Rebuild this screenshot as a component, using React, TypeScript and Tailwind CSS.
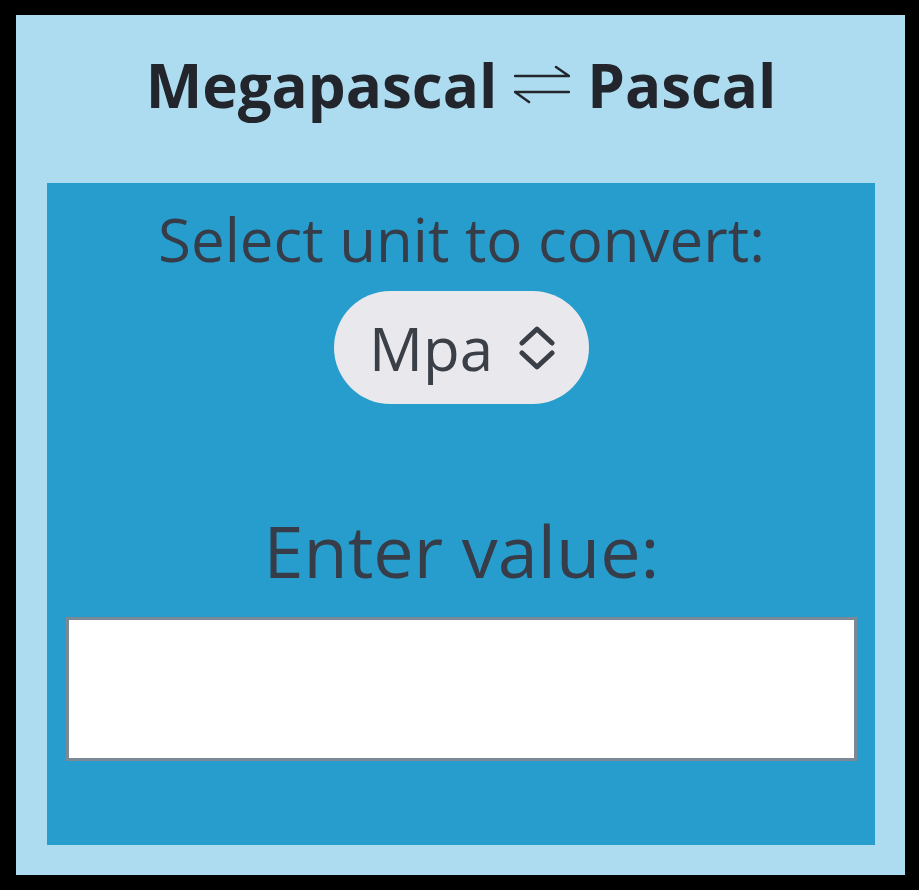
import { useState } from "react";

const ArrowSwap = () => (
  <svg
    width="56"
    height="44"
    viewBox="0 0 56 44"
    className="inline-block mx-[17px] align-baseline"
    fill="none"
    stroke="#22262d"
    strokeWidth="2.5"
    strokeLinecap="round"
  >
    <path d="M1 12H55M42 3L55 12" />
    <path d="M1 28H55M1 28L15 38" />
  </svg>
);

const ChevronsUpDown = () => (
  <svg width="40" height="44" viewBox="0 0 40 44" fill="none" stroke="#3a3e46" strokeWidth="5" strokeLinecap="round" strokeLinejoin="round">
    <path d="M5 17L20 3L35 17" />
    <path d="M5 27L20 41L35 27" />
  </svg>
);

export default function App() {
  const [unit] = useState("Mpa");
  const [value, setValue] = useState("");

  return (
    <div
      className="w-full h-[890px] bg-black pt-[15px] pb-[15px] pl-[16px] pr-[14px]"
      style={{ fontFamily: '"Open Sans", sans-serif' }}
    >
      <div className="h-full bg-[#addcf0] flex flex-col pl-[31px] pr-[30px] pb-[30px]">
        <h1 className="pt-[40px] pb-[68px] text-center text-[60px] leading-[60px] font-bold text-[#22252b] whitespace-nowrap">
          Megapascal
          <ArrowSwap />
          Pascal
        </h1>

        <div className="flex-1 bg-[#279dcd] flex flex-col items-center pl-[19px] pr-[18px] pt-[26px]">
          <p className="text-[60px] leading-[60px] text-[#363d49]">Select unit to convert:</p>

          <div className="mt-[22px] h-[113px] rounded-full bg-[#e9e9ed] flex items-center pl-[35px] pr-[32px] gap-[24px]">
            <span className="text-[60px] leading-[60px] text-[#3b3f47]">{unit}</span>
            <ChevronsUpDown />
          </div>

          <p className="mt-[110px] text-[72px] leading-[72px] text-[#363d49]">Enter value:</p>

          <input
            value={value}
            onChange={(e) => setValue(e.target.value)}
            className="mt-[31px] w-full h-[144px] bg-white border-[3px] border-[#7b8996] outline-none text-[48px] px-4"
          />
        </div>
      </div>
    </div>
  );
}
